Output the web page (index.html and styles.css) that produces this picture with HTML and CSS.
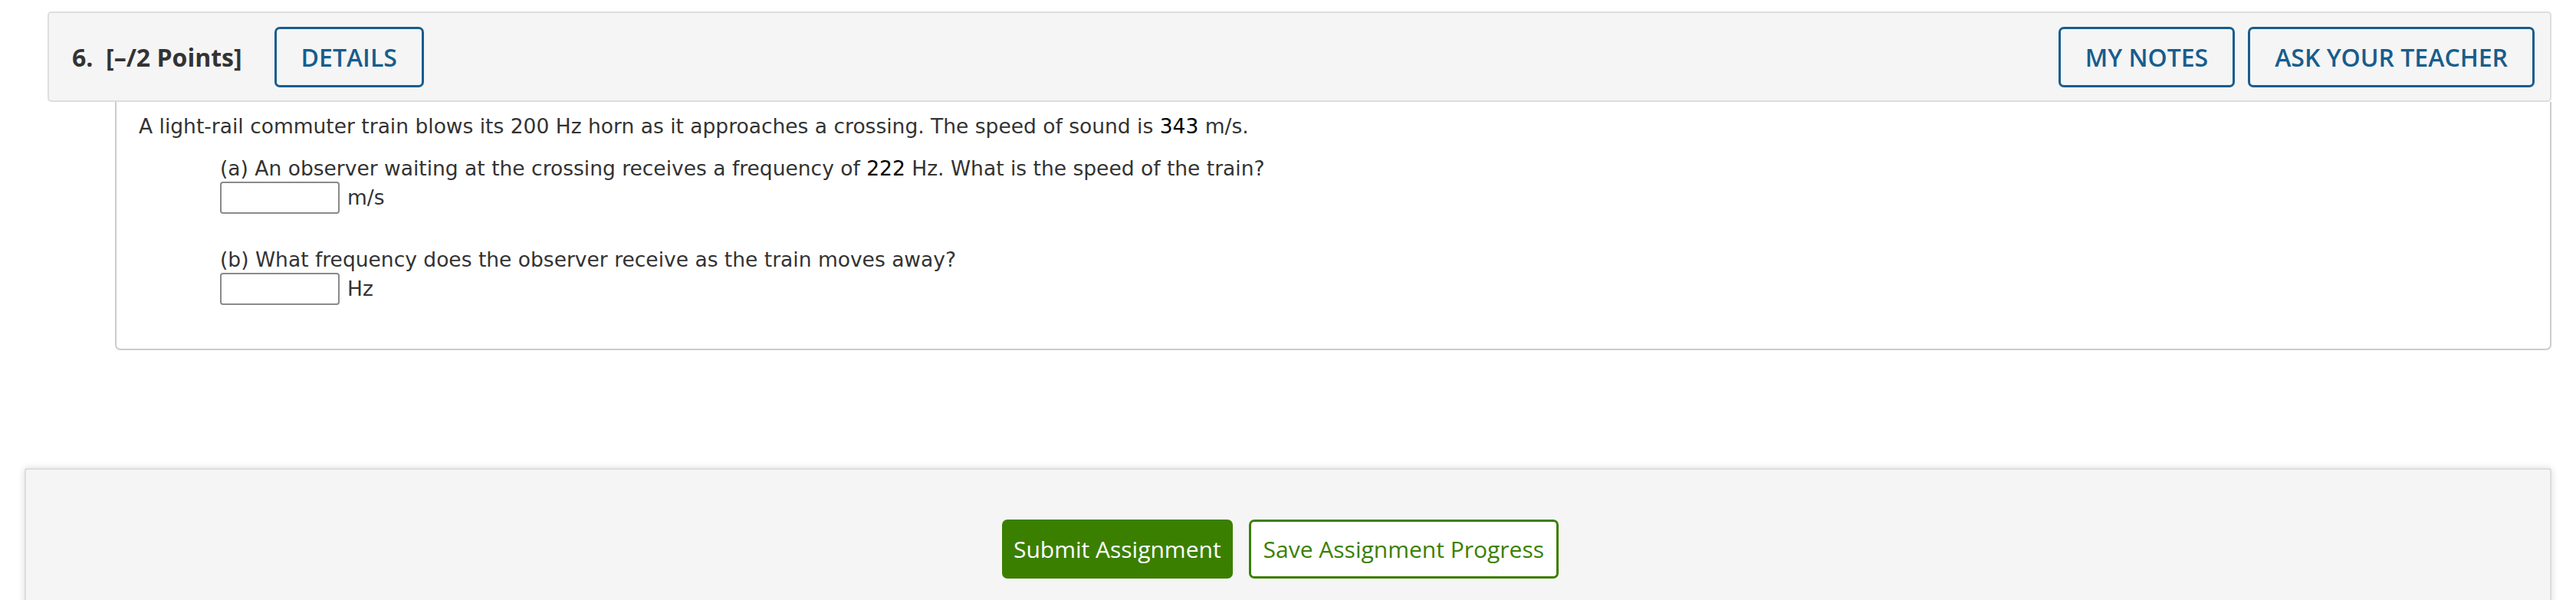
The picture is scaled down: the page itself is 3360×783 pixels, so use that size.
FILE: index.html
```html
<!DOCTYPE html>
<html lang="en">
<head>
<meta charset="utf-8">
<title>Question 6</title>
<link rel="stylesheet" href="styles.css">
</head>
<body>
<div class="page">
  <div class="question">
    <div class="q-header">
      <span class="q-title">6.&nbsp; [&ndash;/2 Points]</span>
      <button class="btn-outline">DETAILS</button>
      <button class="btn-outline push">MY NOTES</button>
      <button class="btn-outline">ASK YOUR TEACHER</button>
    </div>
    <div class="q-body">
      <p class="intro">A light-rail commuter train blows its 200 Hz horn as it approaches a crossing. The speed of sound is <span class="val">343</span> m/s.</p>
      <div class="part">
        <p class="part-text">(a) An observer waiting at the crossing receives a frequency of <span class="val">222</span> Hz. What is the speed of the train?</p>
        <div class="answer"><span class="input"></span><span class="unit">m/s</span></div>
      </div>
      <div class="part part-b">
        <p class="part-text">(b) What frequency does the observer receive as the train moves away?</p>
        <div class="answer"><span class="input"></span><span class="unit">Hz</span></div>
      </div>
    </div>
  </div>
  <div class="footer">
    <button class="btn-submit">Submit Assignment</button>
    <button class="btn-save">Save Assignment Progress</button>
  </div>
</div>
</body>
</html>
```
FILE: styles.css
```css
html, body {
  margin: 0;
  padding: 0;
  background: #fff;
  overflow: hidden;
}
body {
  font-family: Verdana, "DejaVu Sans", sans-serif;
  color: #333;
}
.page {
  padding: 15px 32px 0 32px;
}
.question {
  margin-left: 30px;
}
.q-header {
  display: flex;
  align-items: center;
  gap: 17px;
  box-sizing: border-box;
  height: 118px;
  padding: 0 20px 0 30px;
  background: #f5f5f5;
  border: 2px solid #ddd;
  border-radius: 5px;
}
.q-title {
  font-family: "Open Sans", sans-serif;
  font-weight: 700;
  font-size: 32px;
  color: #333;
  margin-right: 25px;
  white-space: nowrap;
}
.btn-outline {
  box-sizing: border-box;
  height: 79px;
  padding: 0 32px;
  background: #f5f5f5;
  border: 3px solid #175d8d;
  border-radius: 7px;
  font-family: "Open Sans", sans-serif;
  font-weight: 600;
  font-size: 32px;
  color: #175d8d;
  white-space: nowrap;
}
.push {
  margin-left: auto;
}
.q-body {
  margin-left: 88px;
  border: 2px solid #ccc;
  border-top: 0;
  border-radius: 0 0 7px 7px;
  padding: 16px 29px 57px 29px;
  font-size: 26.5px;
  line-height: 32px;
}
.q-body p {
  margin: 0;
}
.val {
  color: #000;
}
.part {
  margin-left: 106px;
  margin-top: 23px;
}
.part-b {
  margin-top: 44px;
}
.answer {
  display: flex;
  align-items: center;
  gap: 10px;
  margin-top: 1px;
}
.input {
  display: block;
  box-sizing: border-box;
  width: 156px;
  height: 42px;
  border: 2px solid #8a8a8a;
  border-radius: 4px;
  background: #fff;
}
.footer {
  margin-top: 154px;
  height: 260px;
  box-sizing: border-box;
  display: flex;
  justify-content: center;
  align-items: flex-start;
  gap: 21px;
  padding: 65px 20px 0 0;
  background: #f5f5f5;
  border: 2px solid #ddd;
  border-radius: 3px;
  box-shadow: 0 0 10px rgba(0, 0, 0, 0.15);
}
.btn-submit, .btn-save {
  box-sizing: border-box;
  height: 77px;
  border: 3px solid #3b7f00;
  border-radius: 7px;
  font-family: "Open Sans", sans-serif;
  font-weight: 400;
  font-size: 30px;
  white-space: nowrap;
}
.btn-submit {
  padding: 0 12px;
  background: #3b7f00;
  color: #fff;
}
.btn-save {
  padding: 0 16px;
  background: #fff;
  color: #3b7f00;
}
```
